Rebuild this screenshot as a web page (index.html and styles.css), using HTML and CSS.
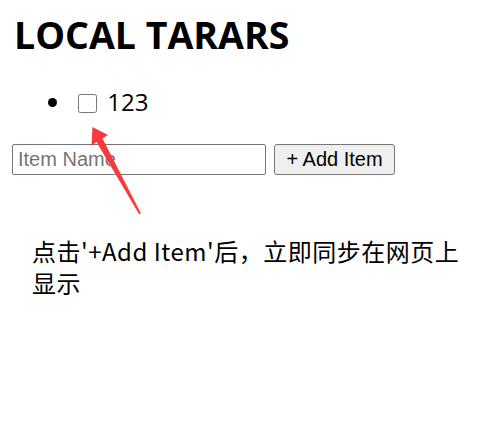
FILE: index.html
```html
<!DOCTYPE html>
<html>
<head>
<meta charset="utf-8">
<link rel="stylesheet" href="styles.css">
</head>
<body>
<div class="app">
  <h1 class="title">LOCAL TARARS</h1>
  <ul class="list">
    <li class="item"><input type="checkbox" class="check"> 123</li>
  </ul>
  <div class="form">
    <input type="text" class="name" placeholder="Item Name">
    <button class="add">+ Add Item</button>
  </div>
  <p class="note">点击'+Add Item'后，立即同步在网页上显示</p>
</div>
<svg class="arrow" width="481" height="437" viewBox="0 0 481 437">
  <polygon points="92.5,127 108,135 102.5,138.5 141,213.5 139,214 96.5,142 91.5,146" fill="#f53c3c"/>
</svg>
</body>
</html>
```

FILE: styles.css
```css
html, body {
  margin: 0;
  padding: 0;
  background: #fff;
}
body {
  position: relative;
  font-family: "Open Sans", "Noto Sans", sans-serif;
  font-size: 24px;
  color: #000;
  width: 481px;
  height: 437px;
  overflow: hidden;
}
.app {
  padding: 12px 12px 0 12px;
}
.title {
  margin: 0;
  font-family: "Open Sans", sans-serif;
  font-weight: 700;
  font-size: 37.5px;
  line-height: 46px;
  padding-left: 2px;
}
.list {
  margin: 28px 0 0 0;
  padding-left: 60px;
}
.item {
  line-height: 32px;
  display: list-item;
}
.check {
  width: 19px;
  height: 19px;
  margin: 0 4px 0 6px;
  vertical-align: -2px;
}
.form {
  display: flex;
  gap: 8px;
  margin-top: 26px;
}
.name {
  box-sizing: border-box;
  width: 254px;
  height: 31px;
  margin: 0;
  padding: 0 5px;
  border: 1px solid #767676;
  border-radius: 2px;
  font-family: "Liberation Sans", Arial, sans-serif;
  font-size: 20px;
}
.name::placeholder {
  color: #757575;
}
.add {
  box-sizing: border-box;
  width: 121px;
  height: 31px;
  margin: 0;
  padding: 0;
  border: 1px solid #767676;
  border-radius: 3px;
  background: #efefef;
  font-family: "Liberation Sans", Arial, sans-serif;
  font-size: 20px;
  color: #000;
}
.note {
  margin: 60px 0 0 20px;
  font-family: "Noto Sans CJK SC", "Noto Sans", sans-serif;
  font-size: 24px;
  line-height: 32px;
  letter-spacing: 0.5px;
}
.arrow {
  position: absolute;
  left: 0;
  top: 0;
  pointer-events: none;
}
```
